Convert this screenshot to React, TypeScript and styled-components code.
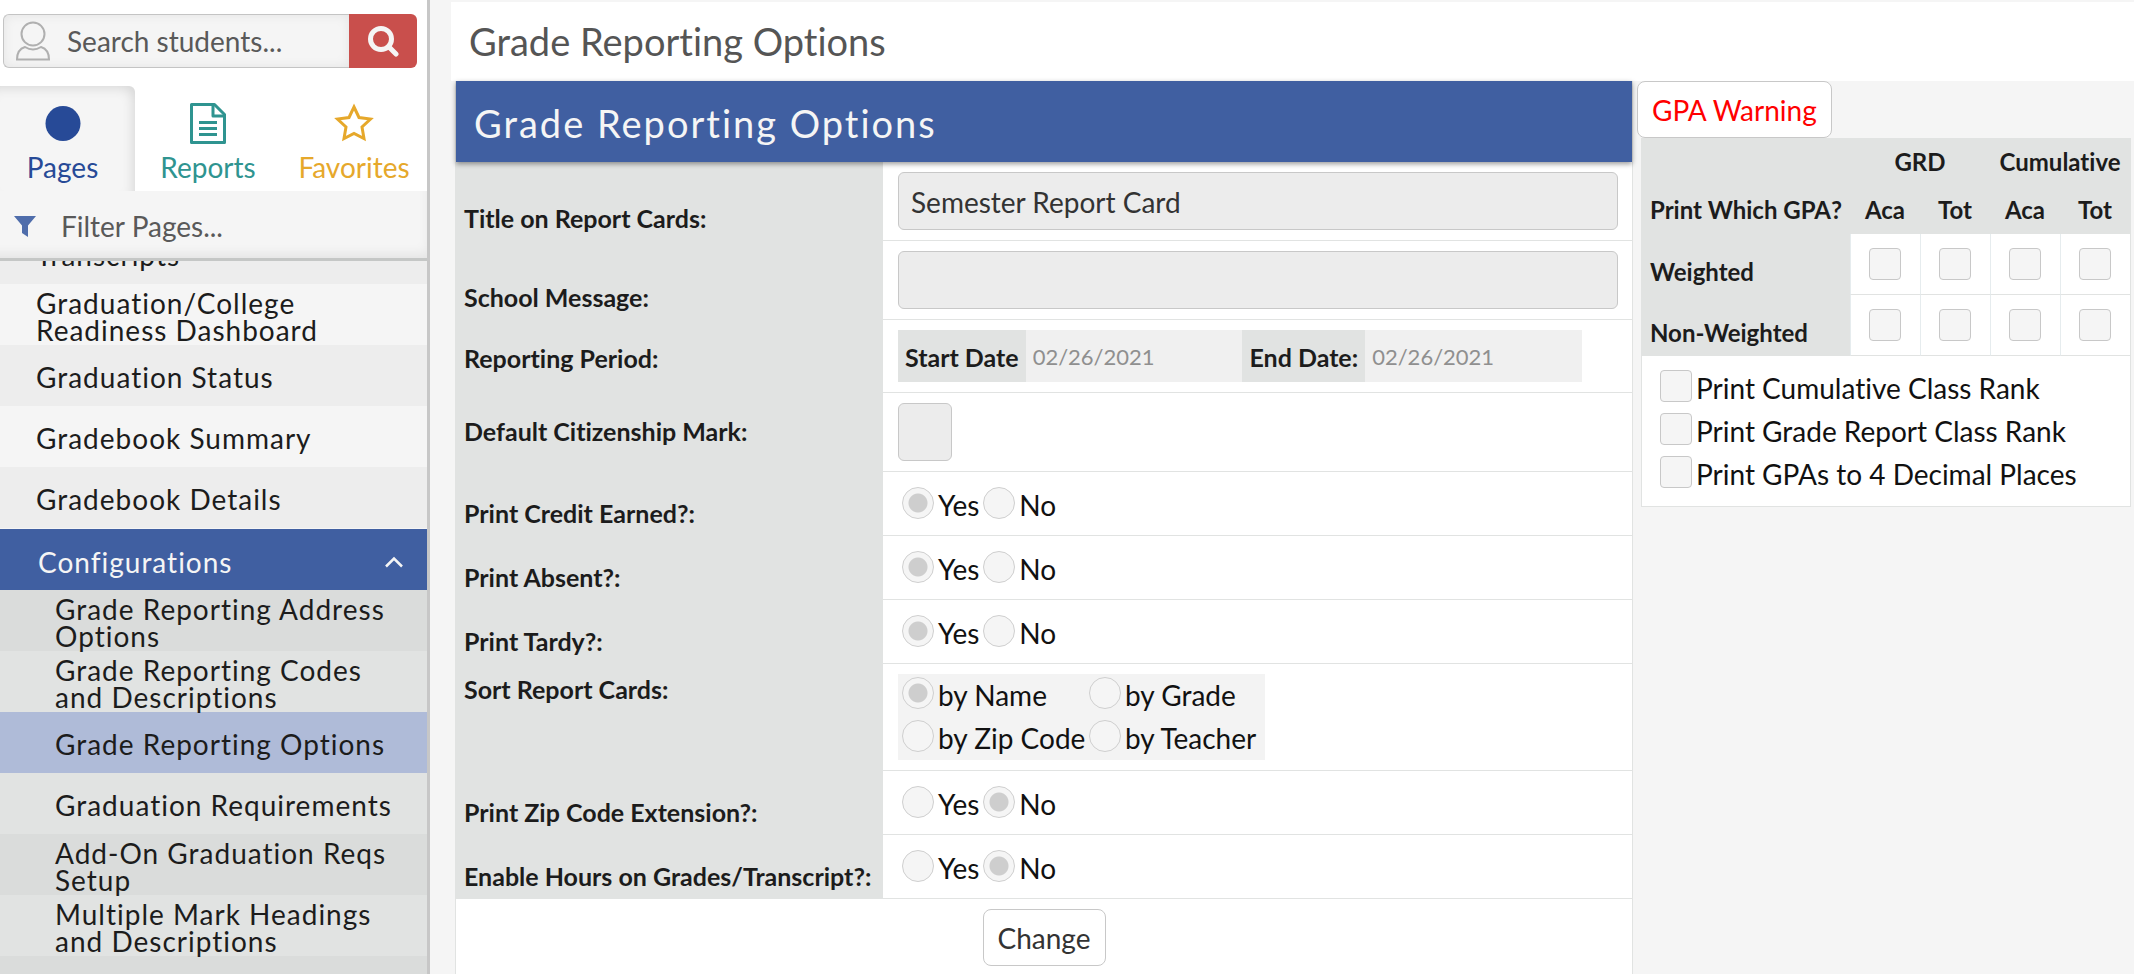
import React from "react";
import styled, { createGlobalStyle, css } from "styled-components";

const blue = "#405fa1";
const rowGray = "#e1e3e2";

const GlobalStyle = createGlobalStyle`
  *, *::before, *::after { box-sizing: border-box; }
  body {
    margin: 0;
    background: #f5f5f5;
    color: #1c1c1c;
    font-family: Lato, "Open Sans", sans-serif;
    font-size: 28px;
    font-variant-ligatures: none;
    line-height: 32px;
  }
  button, input { font: inherit; color: inherit; }
  h1, h2, fieldset, ul { margin: 0; padding: 0; border: 0; font-weight: 400; }
  ul { list-style: none; }
`;

const Shell = styled.div`
  display: grid;
  grid-template-columns: 430px minmax(0, 1fr);
  height: 100vh;
  overflow: hidden;
`;

/* ---------- Sidebar ---------- */

const Sidebar = styled.nav`
  display: flex;
  flex-direction: column;
  min-height: 0;
  background: #fff;
  border-right: 3px solid #c7c7c7;
`;

const Search = styled.form`
  display: flex;
  height: 54px;
  margin: 14px 10px 18px 3px;
`;

const SearchField = styled.label`
  display: flex;
  flex: 1;
  align-items: center;
  gap: 16px;
  min-width: 0;
  padding-left: 11px;
  border: 1px solid #c4c4c4;
  border-right: 0;
  border-radius: 6px 0 0 6px;
  background: #f5f5f5;
  box-shadow: inset 0 0 12px rgba(0, 0, 0, 0.07);
`;

const PlainInput = styled.input`
  flex: 1;
  min-width: 0;
  padding: 0;
  border: 0;
  outline: 0;
  background: transparent;
  &::placeholder { color: #595959; opacity: 1; }
`;

const SearchButton = styled.button`
  display: grid;
  place-items: center;
  width: 68px;
  padding: 0;
  border: 0;
  border-radius: 0 6px 6px 0;
  background: #c94f4c;
`;

const Tabs = styled.div`
  display: grid;
  grid-template-columns: 135px 146px 1fr;
  height: 105px;
`;

const Tab = styled.button<{ $color: string; $active?: boolean }>`
  display: flex;
  flex-direction: column;
  align-items: center;
  gap: 5px;
  padding: 16px 0 0;
  border: 0;
  background: transparent;
  color: ${(p) => p.$color};
  ${(p) =>
    p.$active &&
    css`
      padding-right: 10px;
      border-radius: 0 6px 0 0;
      background: #f5f5f5;
      box-shadow: inset -6px 6px 12px -4px rgba(0, 0, 0, 0.12);
    `}
`;

const Filter = styled.label`
  display: flex;
  align-items: center;
  gap: 24px;
  height: 70px;
  padding: 2px 14px 0 13px;
  border-bottom: 3px solid #c5c7c6;
  background: #f5f5f5;
  box-shadow: inset -6px -12px 12px -8px rgba(0, 0, 0, 0.07);
`;

const ListViewport = styled.div`
  flex: 1;
  min-height: 0;
  overflow: hidden;
  background: #dadcdb;
`;

const PageList = styled.ul`
  margin-top: -38px;
  letter-spacing: 1px;
`;

const SubList = styled.ul``;

const PageLink = styled.a<{ $sub?: boolean; $active?: boolean }>`
  display: flex;
  align-items: center;
  height: 61px;
  padding: 4px 20px 0 ${(p) => (p.$sub ? 55 : 36)}px;
  color: inherit;
  line-height: 27px;
  text-decoration: none;

  li:nth-child(odd) > & { background: ${(p) => (p.$sub ? "#dadcdb" : "#ededed")}; }
  li:nth-child(even) > & { background: ${(p) => (p.$sub ? rowGray : "#f5f5f5")}; }
  ${(p) => p.$active && css`li:nth-child(n) > & { background: #afbbd8; }`}
`;

const GroupButton = styled.button`
  display: flex;
  align-items: center;
  justify-content: space-between;
  width: 100%;
  height: 62px;
  padding: 4px 24px 0 38px;
  border: 0;
  border-top: 1px solid #f5f5f5;
  background: ${blue};
  color: #f5f5f5;
  letter-spacing: inherit;
  text-align: left;
`;

/* ---------- Main ---------- */

const Main = styled.main`
  display: flex;
  flex-direction: column;
  min-width: 0;
  padding: 2px 0 0 21px;
`;

const PageTitle = styled.h1`
  height: 79px;
  padding: 19px 18px;
  background: #fff;
  color: #555;
  font-size: 38px;
  line-height: 40px;
`;

const Columns = styled.div`
  display: grid;
  grid-template-columns: minmax(0, 1fr) 494px;
  flex: 1;
  gap: 4px;
  padding: 0 3px 0 4px;
`;

const Panel = styled.section`
  border: 1px solid ${rowGray};
  border-width: 0 1px;
  background: #fff;
`;

const PanelTitle = styled.h2`
  position: relative;
  height: 81px;
  padding: 20px 18px;
  border-bottom: 1px solid ${blue};
  background: ${blue};
  box-shadow: 0 2px 5px rgba(0, 0, 0, 0.4);
  color: #f5f5f5;
  font-size: 38px;
  letter-spacing: 2px;
  line-height: 44px;
`;

const FormRow = styled.div`
  display: grid;
  grid-template-columns: 427px minmax(0, 1fr);
`;

const captionTop = { field: 40, middle: 22, radio: 25, top: 9 };

const Caption = styled.label<{ $place: keyof typeof captionTop }>`
  padding: ${(p) => captionTop[p.$place]}px 4px 0 8px;
  background: ${rowGray};
  font-size: 25px;
  font-weight: 700;
  white-space: nowrap;
`;

const Value = styled.div<{ $radio?: boolean }>`
  padding: ${(p) => (p.$radio ? "15px 15px 16px 19px" : "10px 14px 10px 15px")};
  border-bottom: 1px solid ${rowGray};
`;

const TextInput = styled.input<{ $short?: boolean }>`
  display: block;
  width: ${(p) => (p.$short ? "54px" : "100%")};
  height: 58px;
  padding: 2px 12px 0;
  border: 1px solid #c8c8c8;
  border-radius: 6px;
  background: #ececec;
  color: #333;
`;

const DateRange = styled.div`
  display: flex;
  width: 684px;
  height: 52px;
  background: #f0f0f0;
`;

const DateCaption = styled.label`
  padding: 11px 7px 0;
  background: ${rowGray};
  font-size: 25px;
  font-weight: 700;
  white-space: nowrap;
`;

const DateInput = styled(PlainInput)`
  padding: 2px 0 0 7px;
  color: #8f8f8f;
  font-size: 22px;
`;

const OptionRow = styled.div`
  display: flex;
`;

const SortGrid = styled.div`
  display: grid;
  grid-template-columns: 187px 176px;
  width: 367px;
  padding-left: 4px;
  background: #f3f3f3;
`;

const Option = styled.label<{ $tall?: boolean }>`
  display: flex;
  gap: 4px;
  height: ${(p) => (p.$tall ? 43 : 32)}px;
  padding-top: ${(p) => (p.$tall ? 3 : 0)}px;
  margin-right: 4px;
  color: #111;
  line-height: 36px;
  white-space: nowrap;
`;

const Radio = styled.input`
  appearance: none;
  flex: none;
  width: 32px;
  height: 32px;
  margin: 0;
  border: 1px solid #cfcfcf;
  border-radius: 50%;
  background: #f5f5f5;
  &:checked { background: radial-gradient(circle, #cecece 9px, #f5f5f5 10px); }
`;

const Check = styled.input`
  appearance: none;
  flex: none;
  display: block;
  width: 32px;
  height: 32px;
  margin: 0;
  border: 1px solid #c8c8c8;
  border-radius: 4px;
  background: #f5f5f5;
`;

const Actions = styled.div`
  display: flex;
  justify-content: center;
  padding-top: 10px;
`;

const Button = styled.button<{ $warning?: boolean }>`
  height: 57px;
  padding: 0 14px;
  border: 1px solid #c8c8c8;
  border-radius: 8px;
  background: #fff;
  color: ${(p) => (p.$warning ? "#f00" : "#333")};
  white-space: nowrap;
`;

const Aside = styled.aside`
  display: flex;
  flex-direction: column;
  align-items: flex-start;
`;

const GpaCard = styled.div`
  align-self: stretch;
  margin-left: 4px;
  border: 1px solid ${rowGray};
  border-top: 0;
  background: #fff;
`;

const GpaTable = styled.table`
  width: 100%;
  table-layout: fixed;
  border-spacing: 0;

  th {
    padding: 0 0 0 8px;
    background: ${rowGray};
    font-size: 24px;
    font-weight: 700;
    text-align: left;
    white-space: nowrap;
  }
  thead th { height: 48px; }
  thead th:not(:first-child) { padding: 0; text-align: center; }
  tbody th { height: 61px; padding-top: 14px; }
  td {
    padding: 0 0 0 18px;
    border-bottom: 1px solid ${rowGray};
    border-left: 1px solid #e6ecee;
  }
`;

const Checks = styled.div`
  padding: 11px 0 10px 18px;
`;

/* ---------- Data ---------- */

const pages = [
  "Transcripts",
  "Graduation/College Readiness Dashboard",
  "Graduation Status",
  "Gradebook Summary",
  "Gradebook Details",
];

const configurations = [
  "Grade Reporting Address Options",
  "Grade Reporting Codes and Descriptions",
  "Grade Reporting Options",
  "Graduation Requirements",
  "Add-On Graduation Reqs Setup",
  "Multiple Mark Headings and Descriptions",
];

function YesNo({ id, caption, value }: { id: string; caption: string; value: "Yes" | "No" }) {
  return (
    <FormRow role="radiogroup" aria-labelledby={id}>
      <Caption as="div" id={id} $place="radio">{caption}</Caption>
      <Value $radio>
        <OptionRow>
          {["Yes", "No"].map((option) => (
            <Option key={option}>
              <Radio type="radio" name={id} defaultChecked={option === value} />
              {option}
            </Option>
          ))}
        </OptionRow>
      </Value>
    </FormRow>
  );
}

export default function App() {
  return (
    <>
      <GlobalStyle />
      <Shell>
        <Sidebar>
          <Search>
            <SearchField>
              <svg width="36" height="40" viewBox="0 0 36 40" fill="none" stroke="#b0b0b0" strokeWidth="2">
                <circle cx="18" cy="13" r="11.5" />
                <path d="M10 26C5 27.500 2 32 2 38.500H34C34 32 31 27.500 26 26C21 29 15 29 10 26Z" />
              </svg>
              <PlainInput aria-label="Search students" placeholder="Search students..." />
            </SearchField>
            <SearchButton type="button" aria-label="Search">
              <svg width="32" height="32" viewBox="0 0 32 32" fill="none" stroke="#f5f5f5">
                <circle cx="14" cy="14" r="10.500" strokeWidth="5" />
                <path d="M21.500 21.500L29 29" strokeWidth="5" strokeLinecap="round" />
              </svg>
            </SearchButton>
          </Search>

          <Tabs>
            <Tab type="button" $color="#274a97" $active>
              <svg width="44" height="44" viewBox="0 0 44 44">
                <circle cx="22" cy="21.500" r="17.500" fill="currentColor" />
              </svg>
              Pages
            </Tab>
            <Tab type="button" $color="#2f9490">
              <svg width="44" height="44" viewBox="0 0 44 44" fill="none" stroke="currentColor" strokeWidth="3" strokeLinejoin="round">
                <path d="M5.500 2.500H28.500L38.500 12.500V40.500H5.500Z" />
                <path d="M27 3V14H38" />
                <path d="M13 20.500H31M13 26.500H31M13 32.500H31" />
              </svg>
              Reports
            </Tab>
            <Tab type="button" $color="#e6a82b">
              <svg width="44" height="44" viewBox="0 0 44 44" fill="none" stroke="currentColor" strokeWidth="3">
                <path d="M22 5L27 15.500L38.500 17L30 25L32 36.500L22 31.500L12 36.500L14 25L5.500 17L17 15.500Z" />
              </svg>
              Favorites
            </Tab>
          </Tabs>

          <Filter>
            <svg width="24" height="24" viewBox="0 0 24 24" fill="#4f6dab">
              <path d="M1 2H23L15 11.500V23L9 19V11.500Z" />
            </svg>
            <PlainInput aria-label="Filter Pages" placeholder="Filter Pages..." />
          </Filter>

          <ListViewport>
            <PageList>
              {pages.map((page) => (
                <li key={page}>
                  <PageLink href="#">{page}</PageLink>
                </li>
              ))}
              <li>
                <GroupButton type="button" aria-expanded="true">
                  Configurations
                  <svg width="18" height="12" viewBox="0 0 18 12" fill="none" stroke="currentColor" strokeWidth="2.500">
                    <path d="M1 10.500L9 2.500L17 10.500" />
                  </svg>
                </GroupButton>
                <SubList>
                  {configurations.map((page) => (
                    <li key={page}>
                      <PageLink href="#" $sub $active={page === "Grade Reporting Options"}>
                        {page}
                      </PageLink>
                    </li>
                  ))}
                </SubList>
              </li>
            </PageList>
          </ListViewport>
        </Sidebar>

        <Main>
          <PageTitle>Grade Reporting Options</PageTitle>
          <Columns>
            <Panel>
              <PanelTitle>Grade Reporting Options</PanelTitle>
              <FormRow>
                <Caption htmlFor="title" $place="field">Title on Report Cards:</Caption>
                <Value><TextInput id="title" defaultValue="Semester Report Card" /></Value>
              </FormRow>
              <FormRow>
                <Caption htmlFor="message" $place="field">School Message:</Caption>
                <Value><TextInput id="message" /></Value>
              </FormRow>
              <FormRow>
                <Caption as="div" $place="middle">Reporting Period:</Caption>
                <Value>
                  <DateRange>
                    <DateCaption htmlFor="start">Start Date</DateCaption>
                    <DateInput id="start" defaultValue="02/26/2021" />
                    <DateCaption htmlFor="end">End Date:</DateCaption>
                    <DateInput id="end" defaultValue="02/26/2021" />
                  </DateRange>
                </Value>
              </FormRow>
              <FormRow>
                <Caption htmlFor="mark" $place="middle">Default Citizenship Mark:</Caption>
                <Value><TextInput id="mark" $short /></Value>
              </FormRow>
              <YesNo id="credit" caption="Print Credit Earned?:" value="Yes" />
              <YesNo id="absent" caption="Print Absent?:" value="Yes" />
              <YesNo id="tardy" caption="Print Tardy?:" value="Yes" />
              <FormRow role="radiogroup" aria-labelledby="sort">
                <Caption as="div" id="sort" $place="top">Sort Report Cards:</Caption>
                <Value>
                  <SortGrid>
                    {["by Name", "by Grade", "by Zip Code", "by Teacher"].map((option) => (
                      <Option key={option} $tall>
                        <Radio type="radio" name="sort" defaultChecked={option === "by Name"} />
                        {option}
                      </Option>
                    ))}
                  </SortGrid>
                </Value>
              </FormRow>
              <YesNo id="zip" caption="Print Zip Code Extension?:" value="No" />
              <YesNo id="hours" caption="Enable Hours on Grades/Transcript?:" value="No" />
              <Actions>
                <Button type="button">Change</Button>
              </Actions>
            </Panel>

            <Aside>
              <Button type="button" $warning>GPA Warning</Button>
              <GpaCard>
                <GpaTable>
                  <colgroup>
                    <col />
                    <col width="70" />
                    <col width="70" />
                    <col width="70" />
                    <col width="70" />
                  </colgroup>
                  <thead>
                    <tr>
                      <th />
                      <th colSpan={2}>GRD</th>
                      <th colSpan={2}>Cumulative</th>
                    </tr>
                    <tr>
                      <th>Print Which GPA?</th>
                      <th>Aca</th>
                      <th>Tot</th>
                      <th>Aca</th>
                      <th>Tot</th>
                    </tr>
                  </thead>
                  <tbody>
                    {["Weighted", "Non-Weighted"].map((kind) => (
                      <tr key={kind}>
                        <th scope="row">{kind}</th>
                        {["GRD Aca", "GRD Tot", "Cumulative Aca", "Cumulative Tot"].map((column) => (
                          <td key={column}>
                            <Check type="checkbox" aria-label={`${kind} ${column}`} />
                          </td>
                        ))}
                      </tr>
                    ))}
                  </tbody>
                </GpaTable>
                <Checks>
                  {[
                    "Print Cumulative Class Rank",
                    "Print Grade Report Class Rank",
                    "Print GPAs to 4 Decimal Places",
                  ].map((text) => (
                    <Option key={text} $tall>
                      <Check type="checkbox" />
                      {text}
                    </Option>
                  ))}
                </Checks>
              </GpaCard>
            </Aside>
          </Columns>
        </Main>
      </Shell>
    </>
  );
}
